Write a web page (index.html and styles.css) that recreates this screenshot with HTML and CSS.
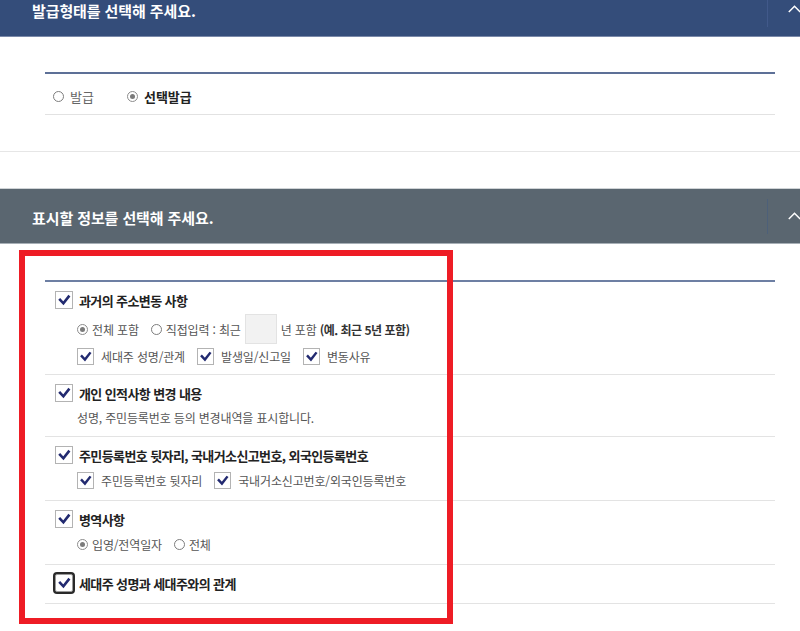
FILE: index.html
```html
<!DOCTYPE html>
<html lang="ko">
<head>
<meta charset="utf-8">
<title>발급형태 선택</title>
<link rel="stylesheet" href="styles.css">
</head>
<body>
<div class="page">
  <section class="panel panel-first">
    <div class="panel-head head-navy">
      <h2 class="panel-title">발급형태를 선택해 주세요.</h2>
      <span class="toggle toggle-navy"><svg class="chev" viewBox="0 0 13 8"><path d="M0.8 7 L6.5 1.3 L12.2 7"/></svg></span>
    </div>
    <div class="panel-body body-first">
      <div class="box">
        <div class="issue-row">
          <label class="issue-opt"><span class="radio"></span><span>발급</span></label>
          <label class="issue-opt issue-strong"><span class="radio on"></span><span>선택발급</span></label>
        </div>
      </div>
    </div>
  </section>

  <section class="panel">
    <div class="panel-head head-slate">
      <h2 class="panel-title">표시할 정보를 선택해 주세요.</h2>
      <span class="toggle toggle-slate"><svg class="chev" viewBox="0 0 13 8"><path d="M0.8 7 L6.5 1.3 L12.2 7"/></svg></span>
    </div>
    <div class="panel-body">
      <div class="box">
        <div class="item item-first">
          <div class="item-title"><span class="cb"><svg viewBox="0 0 16 16"><path d="M3.2 6.8 L7.4 11.3 L13.4 3.6"/></svg></span><span>과거의 주소변동 사항</span></div>
          <div class="sub sub-first">
            <div class="line line-tall">
              <span class="radio on"></span><span class="lbl">전체 포함</span>
              <span class="radio r-next"></span><span class="lbl">직접입력 : 최근</span>
              <span class="year"></span>
              <span class="lbl">년 포함</span>
              <span class="lbl lbl-bold">(예. 최근 5년 포함)</span>
            </div>
            <div class="line">
              <span class="cb cb-sm"><svg viewBox="0 0 16 16"><path d="M3.2 6.8 L7.4 11.3 L13.4 3.6"/></svg></span><span class="lbl cb-lbl">세대주 성명/관계</span>
              <span class="cb cb-sm"><svg viewBox="0 0 16 16"><path d="M3.2 6.8 L7.4 11.3 L13.4 3.6"/></svg></span><span class="lbl cb-lbl">발생일/신고일</span>
              <span class="cb cb-sm"><svg viewBox="0 0 16 16"><path d="M3.2 6.8 L7.4 11.3 L13.4 3.6"/></svg></span><span class="lbl cb-lbl">변동사유</span>
            </div>
          </div>
        </div>

        <div class="item">
          <div class="item-title"><span class="cb"><svg viewBox="0 0 16 16"><path d="M3.2 6.8 L7.4 11.3 L13.4 3.6"/></svg></span><span>개인 인적사항 변경 내용</span></div>
          <div class="sub">
            <div class="line line-desc"><span class="lbl">성명, 주민등록번호 등의 변경내역을 표시합니다.</span></div>
          </div>
        </div>

        <div class="item">
          <div class="item-title"><span class="cb"><svg viewBox="0 0 16 16"><path d="M3.2 6.8 L7.4 11.3 L13.4 3.6"/></svg></span><span>주민등록번호 뒷자리, 국내거소신고번호, 외국인등록번호</span></div>
          <div class="sub">
            <div class="line">
              <span class="cb cb-sm"><svg viewBox="0 0 16 16"><path d="M3.2 6.8 L7.4 11.3 L13.4 3.6"/></svg></span><span class="lbl cb-lbl">주민등록번호 뒷자리</span>
              <span class="cb cb-sm"><svg viewBox="0 0 16 16"><path d="M3.2 6.8 L7.4 11.3 L13.4 3.6"/></svg></span><span class="lbl cb-lbl">국내거소신고번호/외국인등록번호</span>
            </div>
          </div>
        </div>

        <div class="item">
          <div class="item-title"><span class="cb"><svg viewBox="0 0 16 16"><path d="M3.2 6.8 L7.4 11.3 L13.4 3.6"/></svg></span><span>병역사항</span></div>
          <div class="sub">
            <div class="line">
              <span class="radio on"></span><span class="lbl">입영/전역일자</span>
              <span class="radio r-next"></span><span class="lbl">전체</span>
            </div>
          </div>
        </div>

        <div class="item item-last">
          <div class="item-title"><span class="cb cb-focus"><svg viewBox="0 0 16 16"><path d="M3.2 6.8 L7.4 11.3 L13.4 3.6"/></svg></span><span>세대주 성명과 세대주와의 관계</span></div>
        </div>
      </div>
    </div>
  </section>
</div>
<div class="highlight"></div>
</body>
</html>
```

FILE: styles.css
```css
html, body {
  margin: 0;
  padding: 0;
  overflow: hidden;
  background: #fff;
}

body {
  font-family: "Noto Sans CJK KR", "Noto Sans", sans-serif;
  color: #333;
}

.page {
  margin-top: -18px;
}

.panel-first {
  margin-bottom: 36px;
}

.panel-head {
  height: 54px;
  display: flex;
  align-items: center;
  padding-left: 32px;
}

.head-navy {
  background: #344d7a;
  border-bottom: 1px solid #7a89a9;
}

.head-slate {
  background: #5a6670;
  border-top: 1px solid #cfd3d6;
  border-bottom: 1px solid #a7afb6;
}

.panel-title {
  flex: 1;
  margin: 0;
  padding-top: 3px;
  color: #fff;
  font-size: 15px;
  line-height: 20px;
  font-weight: 700;
  letter-spacing: -0.1px;
}

.toggle {
  width: 33px;
  height: 35px;
  box-sizing: border-box;
  padding-left: 20px;
  display: flex;
  align-items: center;
}

.toggle-navy {
  border-left: 1px solid #41598a;
}

.toggle-slate {
  border-left: 1px solid #4d6079;
}

.chev {
  width: 13px;
  height: 8px;
  flex: none;
}

.chev path {
  fill: none;
  stroke: #fff;
  stroke-width: 1.5;
}

.panel-body {
  padding: 36px 25px 0 45px;
}

.body-first {
  padding-top: 35px;
  padding-bottom: 36px;
  border-bottom: 1px solid #e6e6e6;
}

.box {
  border-top: 2px solid #6d7fa3;
}

.body-first .box {
  border-top-color: #5d7097;
}

.issue-row {
  height: 41px;
  box-sizing: border-box;
  padding: 8px 0 3px 8px;
  border-bottom: 1px solid #e2e2e2;
  display: flex;
  align-items: center;
}

.issue-opt {
  display: flex;
  align-items: center;
  gap: 6px;
  font-size: 13px;
  letter-spacing: 0;
  color: #666;
  margin-right: 33px;
}

.issue-strong {
  font-weight: 700;
  color: #222;
}

.radio {
  width: 11px;
  height: 11px;
  box-sizing: border-box;
  border: 1px solid #7d7d7d;
  border-radius: 50%;
  background: #fff;
  position: relative;
  flex: none;
}

.radio.on {
  border-color: #8c8c8c;
}

.radio.on::after {
  content: "";
  position: absolute;
  inset: 2px;
  border-radius: 50%;
  background: #7b7b7b;
}

.item {
  padding: 8px 0 7px 10px;
  border-bottom: 1px solid #e3e3e3;
}

.item-first {
  padding-bottom: 5px;
}

.item-last {
  padding-bottom: 10px;
}

.item-title {
  height: 20px;
  display: flex;
  align-items: center;
  gap: 6px;
  font-size: 13px;
  font-weight: 700;
  letter-spacing: -0.6px;
  color: #222;
}

.cb {
  width: 18px;
  height: 18px;
  box-sizing: border-box;
  border: 1px solid #b3b3b3;
  background: #fff;
  display: block;
  flex: none;
}

.cb svg {
  display: block;
  width: 100%;
  height: 100%;
}

.cb path {
  fill: none;
  stroke: #222a70;
  stroke-width: 2.6;
}

.cb-sm {
  width: 17px;
  height: 17px;
}

.cb-focus {
  border-color: #9a9a9a;
  border-radius: 2px;
  box-shadow: 0 0 0 2px #2a2a2a;
}

.sub {
  margin-top: 2px;
  padding-left: 22px;
}

.sub-first {
  margin-top: 5px;
}

.line {
  height: 26px;
  display: flex;
  align-items: center;
}

.line-tall {
  height: 28px;
}

.line-desc {
  height: 24px;
}

.lbl {
  font-size: 12px;
  letter-spacing: -0.15px;
  color: #555;
  margin-left: 4px;
  white-space: nowrap;
}

.line-desc .lbl {
  margin-left: 0;
}

.lbl-bold {
  font-weight: 700;
  color: #333;
  margin-left: 3px;
  letter-spacing: -0.5px;
}

.cb-lbl {
  margin-left: 7px;
  margin-right: 12px;
}

.r-next {
  margin-left: 12px;
}

.year {
  width: 32px;
  height: 30px;
  box-sizing: border-box;
  background: #f2f2f2;
  border: 1px solid #e3e3e3;
  margin-left: 4px;
  flex: none;
}

.highlight {
  position: absolute;
  left: 19px;
  top: 250px;
  width: 434px;
  height: 374px;
  box-sizing: border-box;
  border: 6px solid #ee1c25;
  pointer-events: none;
}
```
